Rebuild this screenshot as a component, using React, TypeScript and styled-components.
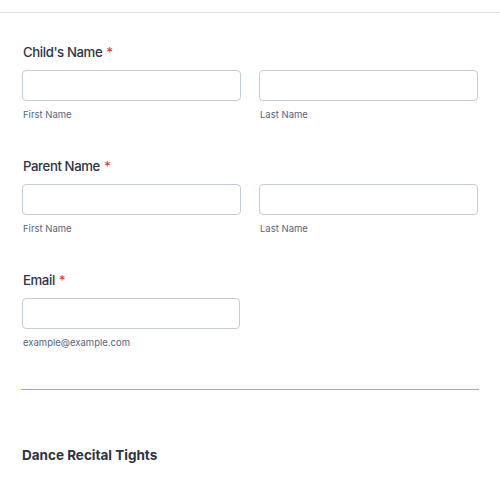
import React from "react";
import styled, { createGlobalStyle } from "styled-components";

const Global = createGlobalStyle`
  html, body { margin: 0; padding: 0; background: #ffffff; }
  body { font-family: Inter, "Noto Sans", sans-serif; -webkit-font-smoothing: antialiased; }
  * { box-sizing: border-box; }
`;

const Page = styled.div`
  width: 500px;
  height: 484px;
  overflow: hidden;
  background: #fff;
`;

const TopRule = styled.div`
  height: 13px;
  border-bottom: 1px solid #dcdde6;
`;

const Content = styled.div`
  padding: 29px 22px 0 22px;
  display: flex;
  flex-direction: column;
`;

const Field = styled.div`
  display: flex;
  flex-direction: column;
  margin-bottom: 34px;
`;

const Label = styled.div`
  font-size: 13.2px;
  line-height: 20px;
  font-weight: 500;
  letter-spacing: -0.4px;
  color: #2c3345;
  margin-left: 1px;
  margin-bottom: 8px;
`;

const Req = styled.span`
  color: #f23a3c;
  margin-left: 4px;
`;

const Row = styled.div<{ $cols: number }>`
  display: grid;
  grid-template-columns: ${(p) => (p.$cols === 2 ? "1fr 1fr" : "218px")};
  column-gap: 18px;
`;

const Col = styled.div`
  display: flex;
  flex-direction: column;
`;

const Input = styled.input`
  height: 31px;
  width: 100%;
  border: 1px solid #c3cad8;
  border-radius: 4px;
  background: #fff;
  outline: none;
  font-family: inherit;
  font-size: 13px;
  padding: 0 8px;
`;

const Sub = styled.div`
  margin-top: 7px;
  margin-left: 1px;
  font-size: 9.5px;
  line-height: 14px;
  color: #57647e;
`;

const Divider = styled.div`
  height: 1px;
  background: #4fc9f0;
  margin: 5px -1px 0 -1px;
`;

const Heading = styled.div`
  margin-top: 55px;
  font-size: 13.5px;
  line-height: 20px;
  font-weight: 700;
  color: #2c3345;
`;

function NameField({ label }: { label: string }) {
  return (
    <Field>
      <Label>
        {label}
        <Req>*</Req>
      </Label>
      <Row $cols={2}>
        <Col>
          <Input />
          <Sub>First Name</Sub>
        </Col>
        <Col>
          <Input />
          <Sub>Last Name</Sub>
        </Col>
      </Row>
    </Field>
  );
}

export default function App() {
  return (
    <Page>
      <Global />
      <TopRule />
      <Content>
        <NameField label="Child's Name" />
        <NameField label="Parent Name" />
        <Field>
          <Label>
            Email
            <Req>*</Req>
          </Label>
          <Row $cols={1}>
            <Col>
              <Input type="email" />
              <Sub>example@example.com</Sub>
            </Col>
          </Row>
        </Field>
        <Divider />
        <Heading>Dance Recital Tights</Heading>
      </Content>
    </Page>
  );
}
